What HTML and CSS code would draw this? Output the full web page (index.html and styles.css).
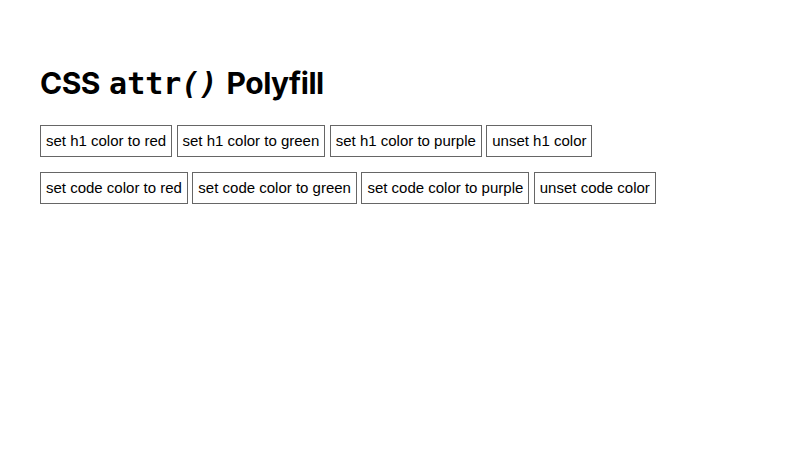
FILE: index.html
```html
<!DOCTYPE html>
<html lang="en">
<head>
<meta charset="utf-8">
<title>CSS attr() Polyfill</title>
<link rel="stylesheet" href="styles.css">
</head>
<body>
<main class="page">
  <h1 class="title">CSS <code class="code">attr<span class="parens">()</span></code> Polyfill</h1>
  <div class="row">
    <button class="btn">set h1 color to red</button>
    <button class="btn">set h1 color to green</button>
    <button class="btn">set h1 color to purple</button>
    <button class="btn">unset h1 color</button>
  </div>
  <div class="row">
    <button class="btn">set code color to red</button>
    <button class="btn">set code color to green</button>
    <button class="btn">set code color to purple</button>
    <button class="btn">unset code color</button>
  </div>
</main>
</body>
</html>
```
FILE: styles.css
```css
html, body {
  margin: 0;
  background: #fff;
}
.page {
  padding: 40px;
  font-family: "Liberation Sans", Arial, sans-serif;
}
.title {
  font-family: Inter, "Liberation Sans", sans-serif;
  font-weight: 700;
  font-size: 30px;
  line-height: 40px;
  margin: 23px 0 21px;
  color: #000;
  letter-spacing: -0.5px;
  word-spacing: 2.5px;
}
.code {
  font-family: "DejaVu Sans Mono", monospace;
  font-weight: 700;
  font-size: 30px;
  letter-spacing: 0;
}
.parens {
  font-style: italic;
}
.row {
  display: flex;
  gap: 4.45px;
  margin-bottom: 15px;
}
.btn {
  font-family: "Liberation Sans", Arial, sans-serif;
  font-size: 15px;
  line-height: 18px;
  padding: 6px 5px;
  height: 32px;
  background: #fff;
  color: #000;
  border: 1px solid #666;
  border-radius: 0;
}
```
